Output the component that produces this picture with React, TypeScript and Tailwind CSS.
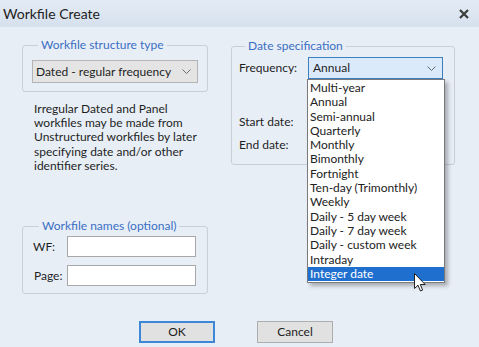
import React from 'react'

const FREQUENCIES = [
	'Multi-year',
	'Annual',
	'Semi-annual',
	'Quarterly',
	'Monthly',
	'Bimonthly',
	'Fortnight',
	'Ten-day (Trimonthly)',
	'Weekly',
	'Daily - 5 day week',
	'Daily - 7 day week',
	'Daily - custom week',
	'Intraday',
	'Integer date',
]

function Chevron() {
	return (
		<svg width="9" height="5" viewBox="0 0 9 5" fill="none">
			<path d="M0.5 0.5L4.5 4.5L8.5 0.5" stroke="#6b6b6b" strokeWidth="1" />
		</svg>
	)
}

function GroupBox({
	title,
	className,
	children,
}: {
	title: string
	className: string
	children: React.ReactNode
}) {
	return (
		<fieldset className={`rounded-[3px] border border-[#c9cfd8] ${className}`}>
			<legend className="ml-[6px] px-[3px] text-[12px] leading-[14px] text-[#3a6fc4]">
				{title}
			</legend>
			{children}
		</fieldset>
	)
}

export default function App() {
	return (
		<div
			className="relative h-[347px] w-[479px] overflow-hidden bg-[#e8eef6] text-[12px] text-[#1e1e1e]"
			style={{ fontFamily: '"Segoe UI", Lato, "Noto Sans", sans-serif' }}
		>
			{/* title bar */}
			<div className="flex h-[27px] items-center justify-between bg-gradient-to-b from-[#e3ebf5] to-[#d6e1ee] pl-[3px] pr-[10px]">
				<span className="text-[14px] leading-none text-[#222]">Workfile Create</span>
				<svg width="10" height="10" viewBox="0 0 10 10">
					<path d="M1 1L9 9M9 1L1 9" stroke="#3a3a3a" strokeWidth="2.2" />
				</svg>
			</div>

			<div className="flex gap-[23px] pl-[22px] pt-[11px]">
				{/* left column */}
				<div className="flex w-[186px] flex-col">
					<GroupBox title="Workfile structure type" className="px-[9px] pb-[8px] pt-[8px]">
						<div className="flex h-[23px] items-center justify-between border border-[#b4b4b4] bg-[#e4e4e4] pl-[3px] pr-[6px]">
							<span>Dated - regular frequency</span>
							<Chevron />
						</div>
					</GroupBox>

					<p className="mt-[10px] pl-[12px] leading-[14.2px]">
						Irregular Dated and Panel
						<br />
						workfiles may be made from
						<br />
						Unstructured workfiles by later
						<br />
						specifying date and/or other
						<br />
						identifier series.
					</p>

					<GroupBox
						title="Workfile names (optional)"
						className="mt-[46px] flex flex-col gap-[8px] pb-[7px] pl-[10px] pt-[3px]"
					>
						<div className="flex items-center">
							<span className="w-[34px]">WF:</span>
							<div className="h-[21px] w-[129px] border border-[#a8a8a8] bg-white" />
						</div>
						<div className="flex items-center">
							<span className="w-[34px] pl-px">Page:</span>
							<div className="h-[21px] w-[129px] border border-[#a8a8a8] bg-white" />
						</div>
					</GroupBox>
				</div>

				{/* right column */}
				<div className="mt-px w-[224px]">
					<GroupBox title="Date specification" className="pb-[12px] pl-[7px] pt-[4px]">
						<div className="flex items-center">
							<span className="w-[69px]">Frequency:</span>
							<div className="flex h-[22px] w-[135px] items-center justify-between border border-[#3c7fc1] bg-[#dbeafa] pl-[4px] pr-[6px]">
								<span>Annual</span>
								<Chevron />
							</div>
						</div>
						<div className="mt-[36px] leading-[14px]">Start date:</div>
						<div className="mt-[9px] leading-[14px]">End date:</div>
					</GroupBox>
				</div>
			</div>

			{/* buttons */}
			<div className="mt-[27px] flex gap-[42px] pl-[139px]">
				<button className="flex h-[22px] w-[76px] items-center justify-center border-2 border-[#3c87d6] bg-[#e1e1e1]">
					OK
				</button>
				<button className="flex h-[22px] w-[76px] items-center justify-center border border-[#adadad] bg-[#e1e1e1]">
					Cancel
				</button>
			</div>

			{/* open frequency list */}
			<ul className="absolute left-[307px] top-[79px] w-[138px] border border-[#7a7a7a] bg-white py-px shadow-[3px_3px_4px_rgba(0,0,0,0.28)]">
				{FREQUENCIES.map((item) => (
					<li
						key={item}
						className={
							item === 'Integer date'
								? 'h-[14.3px] bg-[#1f6fcf] pl-[2px] leading-[14.3px] text-white'
								: 'h-[14.3px] pl-[2px] leading-[14.3px] text-[#222]'
						}
					>
						{item}
					</li>
				))}
			</ul>

			{/* mouse pointer */}
			<svg className="absolute left-[414px] top-[273px]" width="13" height="20" viewBox="0 0 13 20">
				<path
					d="M0.5 0.5V15.5L4 12.2L6.4 18L8.6 17.1L6.3 11.5H11.2Z"
					fill="white"
					stroke="#222"
					strokeWidth="1"
					strokeLinejoin="round"
				/>
			</svg>
		</div>
	)
}
